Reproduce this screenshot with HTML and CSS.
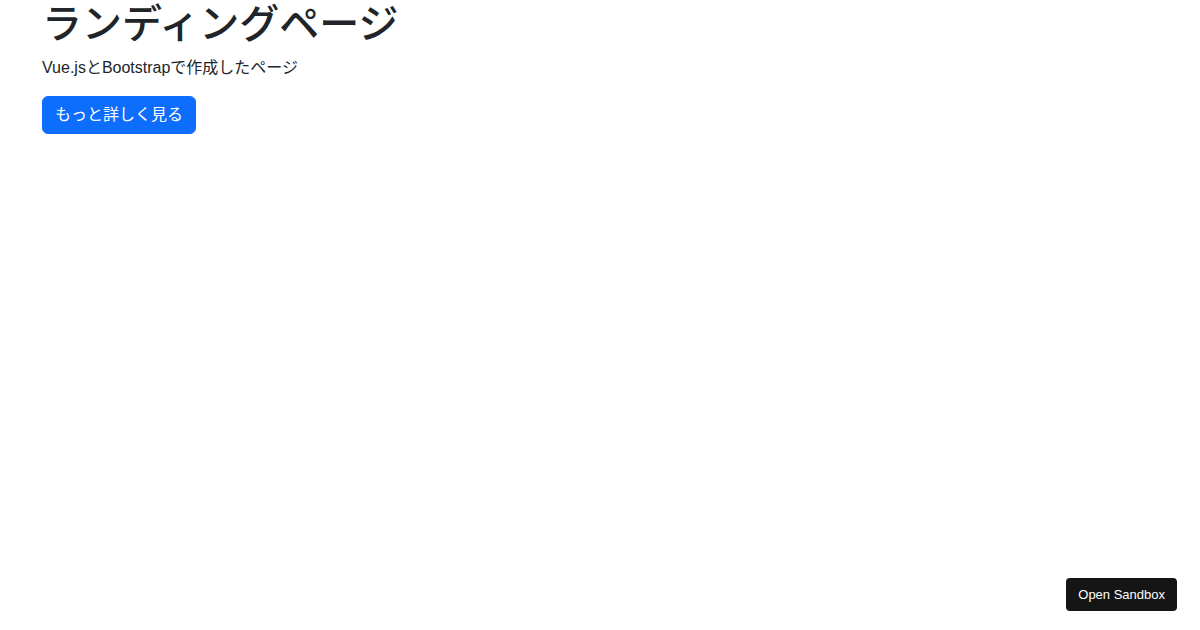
FILE: index.html
```html
<!DOCTYPE html>
<html lang="ja">
<head>
<meta charset="utf-8">
<title>ランディングページ</title>
<link rel="stylesheet" href="styles.css">
</head>
<body>
<div class="container">
  <h1 class="title">ランディングページ</h1>
  <p class="lead-text">Vue.jsとBootstrapで作成したページ</p>
  <button class="btn-primary" type="button">もっと詳しく見る</button>
</div>
<a class="sandbox-btn" href="#">Open Sandbox</a>
</body>
</html>
```
FILE: styles.css
```css
* { box-sizing: border-box; }
html, body { margin: 0; padding: 0; }
body {
  background: #fff;
  color: #212529;
  font-family: "Liberation Sans", "Noto Sans CJK JP", sans-serif;
  font-size: 16px;
  line-height: 1.5;
}
.container {
  max-width: 1140px;
  margin: 0 auto;
  padding: 0 12px;
}
.title {
  margin: 0 0 8px;
  font-size: 40px;
  font-weight: 500;
  line-height: 1.2;
}
.lead-text {
  margin: 0 0 16px;
}
.btn-primary {
  display: inline-block;
  font-family: inherit;
  font-size: 16px;
  line-height: 1.5;
  color: #fff;
  background: #0d6efd;
  border: 1px solid #0d6efd;
  border-radius: 6px;
  padding: 6px 12px;
  cursor: pointer;
}
.sandbox-btn {
  position: fixed;
  right: 23px;
  bottom: 19px;
  height: 33px;
  padding: 0 12px;
  display: flex;
  align-items: center;
  background: #151515;
  color: #fff;
  border-radius: 4px;
  font-family: "Liberation Sans", Arial, sans-serif;
  font-size: 13px;
  text-decoration: none;
}
```
